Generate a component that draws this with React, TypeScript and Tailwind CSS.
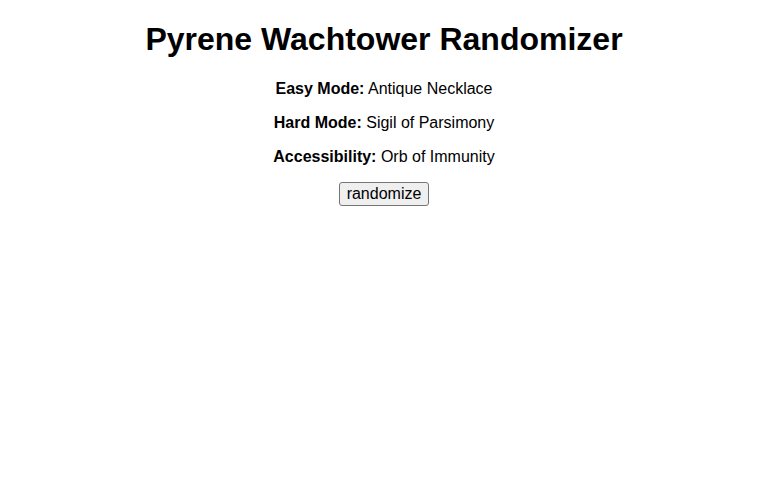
import { useState } from 'react';

const easyItems = ['Antique Necklace', 'Golden Idol', 'Lucky Coin'];
const hardItems = ['Sigil of Parsimony', 'Sigil of Frailty', 'Sigil of Haste'];
const accessItems = ['Orb of Immunity', 'Orb of Clarity', 'Orb of Patience'];

const pick = (list: string[]) => list[Math.floor(Math.random() * list.length)];

export default function App() {
  const [easy, setEasy] = useState(easyItems[0]);
  const [hard, setHard] = useState(hardItems[0]);
  const [access, setAccess] = useState(accessItems[0]);

  const randomize = () => {
    setEasy(pick(easyItems));
    setHard(pick(hardItems));
    setAccess(pick(accessItems));
  };

  return (
    <div className="min-h-[480px] bg-white text-black text-center font-['Liberation_Sans',Arial,sans-serif]">
      <h1 className="pt-[21px] text-[32px] leading-[37px] font-bold">Pyrene Wachtower Randomizer</h1>
      <div className="mt-[22px] flex flex-col gap-4 text-base leading-[18px]">
        <p>
          <b>Easy Mode:</b> {easy}
        </p>
        <p>
          <b>Hard Mode:</b> {hard}
        </p>
        <p>
          <b>Accessibility:</b> {access}
        </p>
      </div>
      <div className="mt-4">
        <button
          onClick={randomize}
          className="h-[24px] px-[7px] border border-[#767676] rounded-[3px] bg-[#efefef] text-base leading-[18px] text-black"
        >
          randomize
        </button>
      </div>
    </div>
  );
}
